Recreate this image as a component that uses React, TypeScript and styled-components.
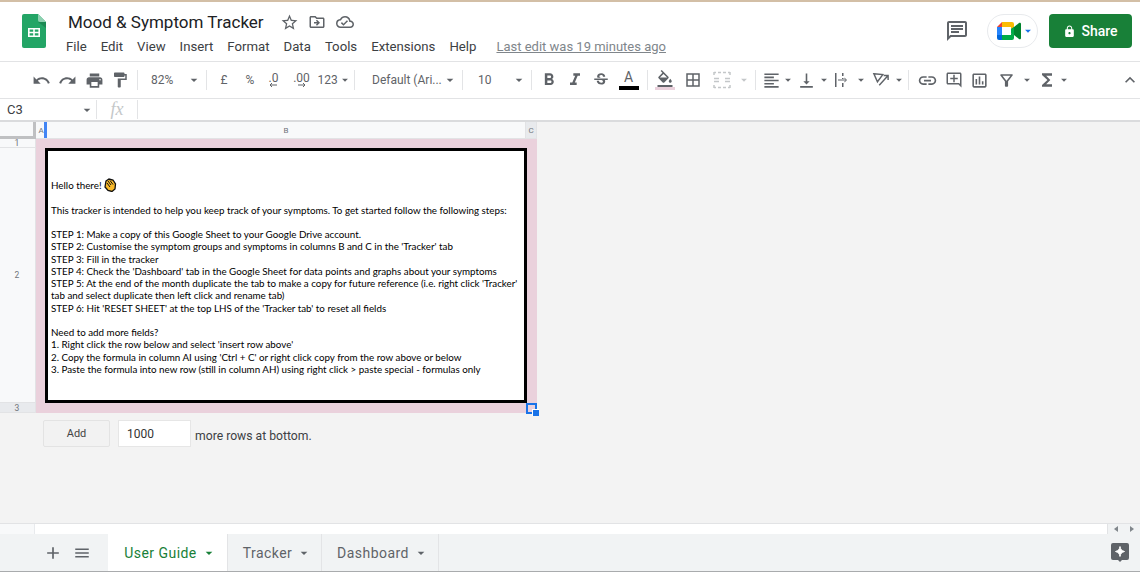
import React from 'react';
import styled, { createGlobalStyle } from 'styled-components';
import {
  MdAdd,
  MdArrowDropDown,
  MdBorderAll,
  MdExpandLess,
  MdFormatAlignLeft,
  MdFormatBold,
  MdFormatColorFill,
  MdFormatItalic,
  MdFormatPaint,
  MdFunctions,
  MdLink,
  MdLock,
  MdMenu,
  MdOutlineAddComment,
  MdOutlineAssessment,
  MdOutlineChat,
  MdOutlineCloudDone,
  MdOutlineDriveFileMove,
  MdOutlineFilterAlt,
  MdOutlineStarBorder,
  MdPrint,
  MdRedo,
  MdStrikethroughS,
  MdUndo,
  MdVerticalAlignBottom,
} from 'react-icons/md';

const GlobalStyle = createGlobalStyle`
  html, body {
    margin: 0;
    padding: 0;
    background: #fff;
    font-family: Roboto, "Liberation Sans", sans-serif;
  }
  * { box-sizing: border-box; }
`;

const Page = styled.div`
  width: 1140px;
  height: 572px;
  display: flex;
  flex-direction: column;
  overflow: hidden;
  border-top: 2px solid #d3bfa6;
`;

const Header = styled.header`
  height: 60px;
  flex: none;
  display: flex;
  align-items: flex-start;
  padding: 12px 8px 0 22px;
  border-bottom: 1px solid #e2e3e5;
`;

const TitleBlock = styled.div`
  margin-left: 22px;
  display: flex;
  flex-direction: column;
  flex: 1;
`;

const TitleRow = styled.div`
  display: flex;
  align-items: center;
  height: 20px;
  margin-top: -2px;
  color: #5f6368;
`;

const DocTitle = styled.div`
  font-size: 17px;
  color: #202124;
  width: 207px;
`;

const TitleIcon = styled.span`
  width: 28px;
  display: flex;
  justify-content: center;
`;

const MenuRow = styled.nav`
  display: flex;
  align-items: center;
  gap: 14px;
  margin-top: 5px;
  margin-left: -2px;
  height: 18px;
  font-size: 13.2px;
  color: #3c4043;
`;

const LastEdit = styled.span`
  margin-left: 6px;
  font-size: 13px;
  color: #80868b;
  text-decoration: underline;
`;

const HeaderActions = styled.div`
  display: flex;
  align-items: center;
  height: 34px;
  color: #5f6368;
`;

const MeetPill = styled.div`
  width: 51px;
  height: 34px;
  margin: 0 11px 0 18px;
  border: 1px solid #e8eaed;
  border-radius: 17px;
  display: flex;
  align-items: center;
  padding-left: 9px;
  color: #1a73e8;
`;

const ShareButton = styled.button`
  width: 83px;
  height: 34px;
  border: 0;
  border-radius: 4px;
  background: #188038;
  color: #fff;
  display: flex;
  align-items: center;
  justify-content: center;
  gap: 5px;
  font-family: Roboto, sans-serif;
  font-size: 14px;
  font-weight: 500;
`;

const Toolbar = styled.div`
  height: 37px;
  flex: none;
  display: flex;
  align-items: center;
  padding-left: 28px;
  border-bottom: 1px solid #e2e3e5;
  color: #5f6368;
`;

const ToolButton = styled.div<{ $w: number; $muted?: boolean }>`
  width: ${({ $w }) => $w}px;
  height: 24px;
  flex: none;
  display: flex;
  align-items: center;
  justify-content: center;
  font-size: 12px;
  color: ${({ $muted }) => ($muted ? '#c4c7c9' : '#5f6368')};
  position: relative;
`;

const ToolSelect = styled.div<{ $w: number; $pad: number }>`
  width: ${({ $w }) => $w}px;
  padding-left: ${({ $pad }) => $pad}px;
  height: 24px;
  flex: none;
  display: flex;
  align-items: center;
  justify-content: space-between;
  font-size: 12px;
  color: #5f6368;
`;

const ToolSep = styled.div`
  width: 1px;
  height: 20px;
  margin: 0 4px;
  flex: none;
  background: #e3e4e6;
`;

const Collapse = styled.div`
  margin-left: auto;
  width: 20px;
  display: flex;
  justify-content: center;
  color: #5f6368;
`;

const DecimalLabel = styled.span`
  display: flex;
  flex-direction: column;
  align-items: center;
  line-height: 10px;
  font-size: 12px;
  svg { margin-top: -1px; }
`;

const ColorLetter = styled.span<{ $bar: string }>`
  display: flex;
  flex-direction: column;
  align-items: center;
  width: 20px;
  font-size: 14px;
  line-height: 13px;
  &::after {
    content: '';
    width: 20px;
    height: 4px;
    margin-top: 2px;
    background: ${({ $bar }) => $bar};
  }
`;

const FillIcon = styled.span`
  display: flex;
  flex-direction: column;
  align-items: center;
  &::after {
    content: '';
    width: 20px;
    height: 3px;
    margin-top: -1px;
    background: #ead1dc;
  }
`;

const FormulaBar = styled.div`
  height: 21px;
  flex: none;
  display: flex;
  align-items: center;
  font-size: 13px;
  color: #3c4043;
`;

const CellName = styled.div`
  width: 96px;
  padding-left: 7px;
  display: flex;
  align-items: center;
  justify-content: space-between;
  padding-right: 1px;
  color: #3c4043;
  svg { color: #5f6368; }
`;

const FormulaSep = styled.div`
  width: 1px;
  height: 19px;
  background: #e3e4e6;
`;

const FxMark = styled.div`
  width: 40px;
  text-align: center;
  font-family: "Liberation Serif", serif;
  font-style: italic;
  font-size: 18px;
  color: #c4c7c9;
`;

const SheetArea = styled.div`
  flex: 1;
  background: #f3f3f3;
  border-top: 2px solid #dadbdd;
  display: flex;
  flex-direction: column;
  min-height: 0;
`;

const Grid = styled.div`
  display: grid;
  grid-template-columns: 36px 11px 479px 11px;
  grid-template-rows: 17px 9px 255px 10px;
  width: 537px;
`;

const Corner = styled.div`
  background: #f8f9fa;
  border-right: 3px solid #bfc0c2;
  border-bottom: 3px solid #bfc0c2;
`;

const ColHead = styled.div<{ $active?: boolean }>`
  background: ${({ $active }) => ($active ? '#e8eaed' : '#f8f9fa')};
  border-right: 1px solid #e2e3e5;
  border-bottom: 1px solid #e2e3e5;
  display: flex;
  align-items: center;
  justify-content: center;
  font-size: 8px;
  color: #70757a;
  position: relative;
`;

const ColMarker = styled.span`
  position: absolute;
  top: 0;
  right: -1px;
  bottom: 0;
  width: 3px;
  background: #4285f4;
`;

const RowHead = styled.div<{ $active?: boolean }>`
  background: ${({ $active }) => ($active ? '#e8eaed' : '#f8f9fa')};
  border-right: 1px solid #e2e3e5;
  border-bottom: 1px solid #e2e3e5;
  display: flex;
  align-items: center;
  justify-content: center;
  padding-right: 1px;
  font-size: 8.5px;
  color: #70757a;
`;

const PinkCell = styled.div`
  background: #ead1dc;
  position: relative;
`;

const PinkBand = styled(PinkCell)`
  grid-column: span 3;
`;

const GuideCell = styled.div`
  position: relative;
  z-index: 1;
  background: #fff;
  border: 3px solid #000;
  margin: 0 -1px 0 -2px;
  padding: 3px 0 0 3px;
  display: flex;
  flex-direction: column;
  justify-content: center;
  font-family: Lato, "Liberation Sans", sans-serif;
  font-size: 9.8px;
  color: #000;
  white-space: nowrap;
`;

const GuideLine = styled.div`
  height: 12.27px;
  display: flex;
  align-items: center;
`;

const Selection = styled.div`
  position: absolute;
  right: 0;
  top: 0;
  width: 11px;
  height: 11px;
  z-index: 2;
  border: 2px solid #1a73e8;
  &::after {
    content: '';
    position: absolute;
    right: -4px;
    bottom: -4px;
    width: 6px;
    height: 6px;
    background: #1a73e8;
    border: 1px solid #fff;
    border-width: 1px 0 0 1px;
  }
`;

const AddRows = styled.div`
  display: flex;
  align-items: center;
  padding: 7px 0 0 43px;
`;

const AddButton = styled.button`
  width: 67px;
  height: 27px;
  background: #f2f2f2;
  border: 1px solid #e3e3e3;
  border-radius: 2px;
  font-family: Roboto, sans-serif;
  font-size: 11px;
  color: #444;
`;

const RowsInput = styled.div`
  width: 73px;
  height: 27px;
  margin: 0 4px 0 8px;
  padding-left: 8px;
  background: #fff;
  border: 1px solid #e6e6e6;
  display: flex;
  align-items: center;
  font-size: 12px;
  color: #333;
`;

const RowsNote = styled.span`
  font-size: 12.2px;
  color: #3c4043;
  padding-top: 4px;
`;

const ScrollRow = styled.div`
  margin-top: auto;
  height: 11px;
  flex: none;
  display: flex;
  border-top: 1px solid #e2e3e5;
  background: #fff;
`;

const ScrollStub = styled.div`
  width: 35px;
  background: #f8f9fa;
  border-right: 1px solid #e8eaed;
`;

const ScrollArrows = styled.div`
  margin-left: auto;
  width: 33px;
  display: flex;
  background: #f1f3f4;
  border-left: 1px solid #e2e3e5;
`;

const ScrollArrow = styled.span<{ $left?: boolean }>`
  flex: 1;
  display: flex;
  align-items: center;
  justify-content: center;
  &::before {
    content: '';
    border-top: 3px solid transparent;
    border-bottom: 3px solid transparent;
    ${({ $left }) => ($left ? 'border-right: 4px solid #80868b;' : 'border-left: 4px solid #80868b;')}
  }
`;

const TabBar = styled.div`
  height: 38px;
  flex: none;
  display: flex;
  align-items: stretch;
  background: #f1f3f4;
  border-bottom: 1px solid #a9abad;
  color: #5f6368;
`;

const TabTool = styled.div<{ $w: number }>`
  width: ${({ $w }) => $w}px;
  display: flex;
  align-items: center;
  justify-content: center;
`;

const SheetTab = styled.div<{ $w: number; $active?: boolean }>`
  width: ${({ $w }) => $w}px;
  padding-left: 6px;
  display: flex;
  align-items: center;
  justify-content: center;
  gap: 4px;
  font-size: 14px;
  font-weight: 400;
  letter-spacing: 0.45px;
  background: ${({ $active }) => ($active ? '#fff' : 'transparent')};
  color: ${({ $active }) => ($active ? '#188038' : '#5f6368')};
  border-right: 1px solid #e3e4e6;
`;

const ExploreButton = styled.div`
  margin: 9px 11px 0 auto;
`;

const Caret = ({ size = 16 }: { size?: number }) => <MdArrowDropDown size={size} style={{ flex: 'none' }} />;

const SheetsLogo = () => (
  <svg width="24" height="34" viewBox="0 0 24 34">
    <path d="M2 0h14l8 8v24a2 2 0 0 1-2 2H2a2 2 0 0 1-2-2V2a2 2 0 0 1 2-2z" fill="#23a566" />
    <path d="M16 0l8 8h-6a2 2 0 0 1-2-2z" fill="#8ed1b1" />
    <path d="M16 8l8 6V8z" fill="#1b8a53" />
    <path d="M6 14h12v9H6z M7.6 15.5v2.2h3.6v-2.2z M12.8 15.5v2.2h3.6v-2.2z M7.6 19.3v2.2h3.6v-2.2z M12.8 19.3v2.2h3.6v-2.2z" fill="#fff" fillRule="evenodd" />
  </svg>
);

const MeetLogo = () => (
  <svg width="24" height="18" viewBox="0 0 24 18">
    <path d="M5 0v5H0z" fill="#ea4335" />
    <path d="M5 0h10a2 2 0 0 1 2 2v3l-3 2V5H5z" fill="#fbbc04" />
    <path d="M0 5h5v8H0z" fill="#2684fc" />
    <path d="M0 13h5v5H2a2 2 0 0 1-2-2z" fill="#0066da" />
    <path d="M5 13h9v-2l3 2v3a2 2 0 0 1-2 2H5z" fill="#00ac47" />
    <path d="M14 7l3-2 5-4c1-.6 2 0 2 1v14c0 1-1 1.600-2 1l-5-4-3-2z" fill="#00832d" />
    <path d="M14 7l3-2v8l-3-2z" fill="#00ac47" />
  </svg>
);

const ClapEmoji = () => (
  <svg width="14" height="14" viewBox="0 0 14 14" style={{ marginLeft: 1 }}>
    <path d="M3 3l3-2 4 1 2.500 4-.5 5-3 2.500-4-1L2 9z" fill="#f9b928" stroke="#111" strokeWidth="1.300" />
    <path d="M5 3l3 4M7 2.500l3 4M4 5l3 4" stroke="#111" strokeWidth="1" fill="none" />
  </svg>
);

const StrikeMerge = () => (
  <svg width="18" height="18" viewBox="0 0 18 18" fill="none" stroke="currentColor" strokeWidth="1.500">
    <path d="M1 1.500h2M5 1.500h3M10 1.500h3M15 1.500h2M1 16.500h2M5 16.500h3M10 16.500h3M15 16.500h2" />
    <path d="M1 7.500h5M1 10.500h5M12 7.500h5M12 10.500h5" />
    <path d="M1 1v3M17 1v3M1 14v3M17 14v3" />
  </svg>
);

const WrapIcon = () => (
  <svg width="18" height="18" viewBox="0 0 18 18" fill="currentColor">
    <path d="M2 2h1.500v14H2z" />
    <path d="M9 2h1.500v3H9zM9 7h1.500v1H9zM9 12h1.500v4H9z" />
    <path d="M5 9.600h7.500v-1.200H5zM11.500 6.500L14 9l-2.500 2.500z" />
  </svg>
);

const RotateIcon = () => (
  <svg width="18" height="16" viewBox="0 0 20 18" fill="none" stroke="currentColor" strokeWidth="1.600">
    <path d="M2 2l10 1-6 8z" />
    <path d="M8 15l10-11M13 4h5v5" />
  </svg>
);

const ExploreIcon = () => (
  <svg width="18" height="19" viewBox="0 0 18 19">
    <path d="M2 0h14a2 2 0 0 1 2 2v13a2 2 0 0 1-2 2h-5l-2 2-2-2H2a2 2 0 0 1-2-2V2a2 2 0 0 1 2-2z" fill="#5f6368" />
    <path d="M9 3.500c.6 3 1.500 4 4.500 5-3 1-3.900 2-4.500 5-.6-3-1.500-4-4.500-5 3-1 3.900-2 4.500-5z" fill="#fff" stroke="#fff" />
  </svg>
);

const guideLines = [
  '',
  'This tracker is intended to help you keep track of your symptoms. To get started follow the following steps:',
  '',
  'STEP 1: Make a copy of this Google Sheet to your Google Drive account.',
  "STEP 2: Customise the symptom groups and symptoms in columns B and C in the 'Tracker' tab",
  'STEP 3: Fill in the tracker',
  "STEP 4: Check the 'Dashboard' tab in the Google Sheet for data points and graphs about your symptoms",
  "STEP 5: At the end of the month duplicate the tab to make a copy for future reference (i.e. right click 'Tracker'",
  'tab and select duplicate then left click and rename tab)',
  "STEP 6: Hit 'RESET SHEET' at the top LHS of the 'Tracker tab' to reset all fields",
  '',
  'Need to add more fields?',
  "1. Right click the row below and select 'insert row above'",
  "2. Copy the formula in column AI using 'Ctrl + C' or right click copy from the row above or below",
  '3. Paste the formula into new row (still in column AH) using right click > paste special - formulas only',
];

const menuItems = ['File', 'Edit', 'View', 'Insert', 'Format', 'Data', 'Tools', 'Extensions', 'Help'];

export default function App() {
  return (
    <>
      <GlobalStyle />
      <Page>
        <Header>
          <SheetsLogo />
          <TitleBlock>
            <TitleRow>
              <DocTitle>Mood &amp; Symptom Tracker</DocTitle>
              <TitleIcon><MdOutlineStarBorder size={19} /></TitleIcon>
              <TitleIcon><MdOutlineDriveFileMove size={18} /></TitleIcon>
              <TitleIcon><MdOutlineCloudDone size={18} /></TitleIcon>
            </TitleRow>
            <MenuRow>
              {menuItems.map((item) => (
                <span key={item}>{item}</span>
              ))}
              <LastEdit>Last edit was 19 minutes ago</LastEdit>
            </MenuRow>
          </TitleBlock>
          <HeaderActions>
            <MdOutlineChat size={24} />
            <MeetPill>
              <MeetLogo />
              <Caret size={14} />
            </MeetPill>
            <ShareButton>
              <MdLock size={13} />
              Share
            </ShareButton>
          </HeaderActions>
        </Header>

        <Toolbar>
          <ToolButton $w={26}><MdUndo size={19} /></ToolButton>
          <ToolButton $w={27}><MdRedo size={19} /></ToolButton>
          <ToolButton $w={26}><MdPrint size={19} /></ToolButton>
          <ToolButton $w={26}><MdFormatPaint size={18} /></ToolButton>
          <ToolSep />
          <ToolSelect $w={60} $pad={9}>82%<Caret /></ToolSelect>
          <ToolSep />
          <ToolButton $w={26}>£</ToolButton>
          <ToolButton $w={26}>%</ToolButton>
          <ToolButton $w={21}>
            <DecimalLabel>.0<svg width="8" height="6" viewBox="0 0 8 6"><path d="M8 3H1M3 1L1 3l2 2" stroke="#5f6368" fill="none" /></svg></DecimalLabel>
          </ToolButton>
          <ToolButton $w={35}>
            <DecimalLabel>.00<svg width="8" height="6" viewBox="0 0 8 6"><path d="M0 3h7M5 1l2 2-2 2" stroke="#5f6368" fill="none" /></svg></DecimalLabel>
          </ToolButton>
          <ToolButton $w={31}>123<Caret size={14} /></ToolButton>
          <ToolSep />
          <ToolSelect $w={99} $pad={13}>Default (Ari...<Caret /></ToolSelect>
          <ToolSep />
          <ToolSelect $w={60} $pad={11}>10<Caret /></ToolSelect>
          <ToolSep />
          <ToolButton $w={26}><MdFormatBold size={20} /></ToolButton>
          <ToolButton $w={26}><MdFormatItalic size={20} /></ToolButton>
          <ToolButton $w={26}><MdStrikethroughS size={18} /></ToolButton>
          <ToolButton $w={29}><ColorLetter $bar="#000">A</ColorLetter></ToolButton>
          <ToolSep />
          <ToolButton $w={26}><FillIcon><MdFormatColorFill size={18} /></FillIcon></ToolButton>
          <ToolButton $w={30}><MdBorderAll size={18} /></ToolButton>
          <ToolButton $w={28} $muted><StrikeMerge /></ToolButton>
          <ToolButton $w={15} $muted><Caret size={14} /></ToolButton>
          <ToolSep />
          <ToolButton $w={22}><MdFormatAlignLeft size={19} /></ToolButton>
          <ToolButton $w={12}><Caret size={14} /></ToolButton>
          <ToolButton $w={24}><MdVerticalAlignBottom size={19} /></ToolButton>
          <ToolButton $w={12}><Caret size={14} /></ToolButton>
          <ToolButton $w={24}><WrapIcon /></ToolButton>
          <ToolButton $w={14}><Caret size={14} /></ToolButton>
          <ToolButton $w={26}><RotateIcon /></ToolButton>
          <ToolButton $w={10}><Caret size={14} /></ToolButton>
          <ToolSep />
          <ToolButton $w={28}><MdLink size={21} /></ToolButton>
          <ToolButton $w={25}><MdOutlineAddComment size={18} /></ToolButton>
          <ToolButton $w={27}><MdOutlineAssessment size={19} /></ToolButton>
          <ToolButton $w={27}><MdOutlineFilterAlt size={19} /></ToolButton>
          <ToolButton $w={14}><Caret size={14} /></ToolButton>
          <ToolButton $w={26}><MdFunctions size={20} /></ToolButton>
          <ToolButton $w={8}><Caret size={14} /></ToolButton>
          <Collapse><MdExpandLess size={20} /></Collapse>
        </Toolbar>

        <FormulaBar>
          <CellName>C3<Caret /></CellName>
          <FormulaSep />
          <FxMark>fx</FxMark>
          <FormulaSep />
        </FormulaBar>

        <SheetArea>
          <Grid>
            <Corner />
            <ColHead>A<ColMarker /></ColHead>
            <ColHead>B</ColHead>
            <ColHead $active>C</ColHead>

            <RowHead>1</RowHead>
            <PinkBand />

            <RowHead>2</RowHead>
            <PinkCell />
            <GuideCell>
              <GuideLine>Hello there!<ClapEmoji /></GuideLine>
              {guideLines.map((line, i) => (
                <GuideLine key={i}>{line}</GuideLine>
              ))}
            </GuideCell>
            <PinkCell />

            <RowHead $active>3</RowHead>
            <PinkCell />
            <PinkCell />
            <PinkCell><Selection /></PinkCell>
          </Grid>

          <AddRows>
            <AddButton>Add</AddButton>
            <RowsInput>1000</RowsInput>
            <RowsNote>more rows at bottom.</RowsNote>
          </AddRows>

          <ScrollRow>
            <ScrollStub />
            <ScrollArrows>
              <ScrollArrow $left />
              <ScrollArrow />
            </ScrollArrows>
          </ScrollRow>
        </SheetArea>

        <TabBar>
          <TabTool $w={38} />
          <TabTool $w={29}><MdAdd size={20} /></TabTool>
          <TabTool $w={30}><MdMenu size={18} /></TabTool>
          <TabTool $w={11} />
          <SheetTab $w={120} $active>User Guide<Caret /></SheetTab>
          <SheetTab $w={94}>Tracker<Caret /></SheetTab>
          <SheetTab $w={117}>Dashboard<Caret /></SheetTab>
          <ExploreButton><ExploreIcon /></ExploreButton>
        </TabBar>
      </Page>
    </>
  );
}
